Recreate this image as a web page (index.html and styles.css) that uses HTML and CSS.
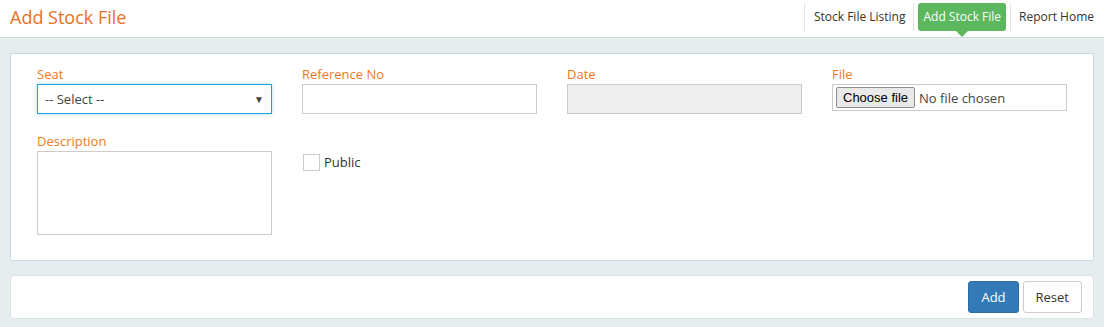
FILE: index.html
```html
<!DOCTYPE html>
<html lang="en">
<head>
  <meta charset="UTF-8">
  <title>Add Stock File</title>
  <link rel="stylesheet" href="styles.css">
</head>
<body>
  <div class="page-header">
    <h1 class="page-title">Add Stock File</h1>
    <ul class="page-nav">
      <li><a href="#">Stock File Listing</a></li>
      <li class="active"><a href="#">Add Stock File</a></li>
      <li><a href="#">Report Home</a></li>
    </ul>
  </div>

  <div class="content">
    <div class="panel form-panel">
      <div class="form-row">
        <div class="field">
          <label>Seat</label>
          <div class="select-box focused">
            <span>-- Select --</span>
            <span class="caret">&#9660;</span>
          </div>
        </div>
        <div class="field">
          <label>Reference No</label>
          <input type="text" class="text-input">
        </div>
        <div class="field">
          <label>Date</label>
          <input type="text" class="text-input" disabled>
        </div>
        <div class="field">
          <label>File</label>
          <div class="file-box">
            <span class="file-btn">Choose file</span>
            <span class="file-name">No file chosen</span>
          </div>
        </div>
      </div>
      <div class="form-row">
        <div class="field">
          <label>Description</label>
          <textarea class="text-area"></textarea>
        </div>
        <div class="field check-field">
          <span class="check-box"></span>
          <span class="check-label">Public</span>
        </div>
      </div>
    </div>

    <div class="panel action-panel">
      <button class="btn btn-primary">Add</button>
      <button class="btn btn-default">Reset</button>
    </div>
  </div>
</body>
</html>
```

FILE: styles.css
```css
body {
  margin: 0;
  font-family: "Open Sans", "Liberation Sans", sans-serif;
  font-size: 13px;
  color: #333;
  background: #e5edef;
}

.page-header {
  box-sizing: border-box;
  height: 38px;
  background: #fff;
  border-bottom: 1px solid #d3dcdf;
  display: flex;
  justify-content: space-between;
  align-items: center;
  padding: 0 10px 3px;
}

.page-title {
  margin: 0;
  font-size: 18px;
  font-weight: normal;
  color: #e8701e;
}

.page-nav {
  list-style: none;
  margin: 0;
  padding: 0;
  display: flex;
  align-items: center;
  height: 100%;
}

.page-nav li {
  border-left: 1px solid #dfe5e7;
  padding: 0 4px;
  height: 28px;
  display: flex;
  align-items: center;
}

.page-nav li:first-child {
  padding-left: 5px;
}

.page-nav li a {
  color: #333;
  text-decoration: none;
  font-size: 12px;
  padding: 0 4px;
  line-height: 28px;
  display: block;
}

.page-nav li:last-child,
.page-nav li:last-child a {
  padding-right: 0;
}

.page-nav li.active a {
  background: #5cb85c;
  color: #fff;
  border-radius: 3px;
  padding: 0 5px;
  position: relative;
}

.page-nav li.active a::after {
  content: "";
  position: absolute;
  left: 50%;
  bottom: -6px;
  margin-left: -6px;
  border-left: 6px solid transparent;
  border-right: 6px solid transparent;
  border-top: 6px solid #5cb85c;
}

.content {
  padding: 15px 10px 0;
}

.panel {
  background: #fff;
  border: 1px solid #c9dae6;
  border-radius: 2px;
}

.form-panel {
  padding: 11px 26px 25px;
}

.form-row {
  display: flex;
  gap: 30px;
  margin-bottom: 18px;
}

.form-row:last-child {
  margin-bottom: 0;
}

.field {
  width: 235px;
  display: flex;
  flex-direction: column;
}

.field label {
  color: #f0781a;
  font-size: 13px;
  line-height: 19px;
}

.text-input,
.select-box,
.file-box {
  box-sizing: border-box;
  width: 235px;
  height: 30px;
  border: 1px solid #ccc;
  background: #fff;
  margin: 0;
  font-family: inherit;
}

.text-input:disabled {
  background: #eee;
}

.select-box {
  display: flex;
  align-items: center;
  justify-content: space-between;
  padding: 0 7px;
  font-size: 13px;
  color: #444;
}

.select-box.focused {
  border-color: #1e9fd6;
  box-shadow: 0 0 4px rgba(30, 159, 214, 0.35);
}

.caret {
  font-size: 10px;
  color: #444;
}

.file-box {
  display: flex;
  align-items: center;
  padding: 0 3px;
  height: 27px;
}

.file-btn {
  font-family: "Liberation Sans", Arial, sans-serif;
  font-size: 13px;
  color: #000;
  background: #e9e9e9;
  border: 1px solid #8f8f8f;
  border-radius: 2px;
  padding: 2px 6px;
  line-height: 15px;
}

.file-name {
  margin-left: 4px;
  color: #444;
  font-size: 13px;
}

.text-area {
  box-sizing: border-box;
  width: 235px;
  height: 84px;
  border: 1px solid #ccc;
  resize: none;
  margin: 0;
}

.check-field {
  flex-direction: row;
  align-items: flex-start;
  padding-top: 22px;
  padding-left: 1px;
}

.check-box {
  width: 15px;
  height: 15px;
  border: 1px solid #ccc;
  background: #fff;
}

.check-label {
  margin-left: 4px;
  line-height: 17px;
  color: #333;
}

.action-panel {
  margin-top: 14px;
  border-color: #dbe3e6;
  border-radius: 4px;
  display: flex;
  justify-content: flex-end;
  gap: 4px;
  padding: 5px 11px;
}

.btn {
  font-family: inherit;
  font-size: 13px;
  height: 32px;
  border-radius: 3px;
  padding: 0 12px;
  border: 1px solid #ccc;
  cursor: pointer;
}

.btn-primary {
  background: #337ab7;
  border-color: #2e6da4;
  color: #fff;
}

.btn-default {
  background: #fff;
  color: #333;
}
```
